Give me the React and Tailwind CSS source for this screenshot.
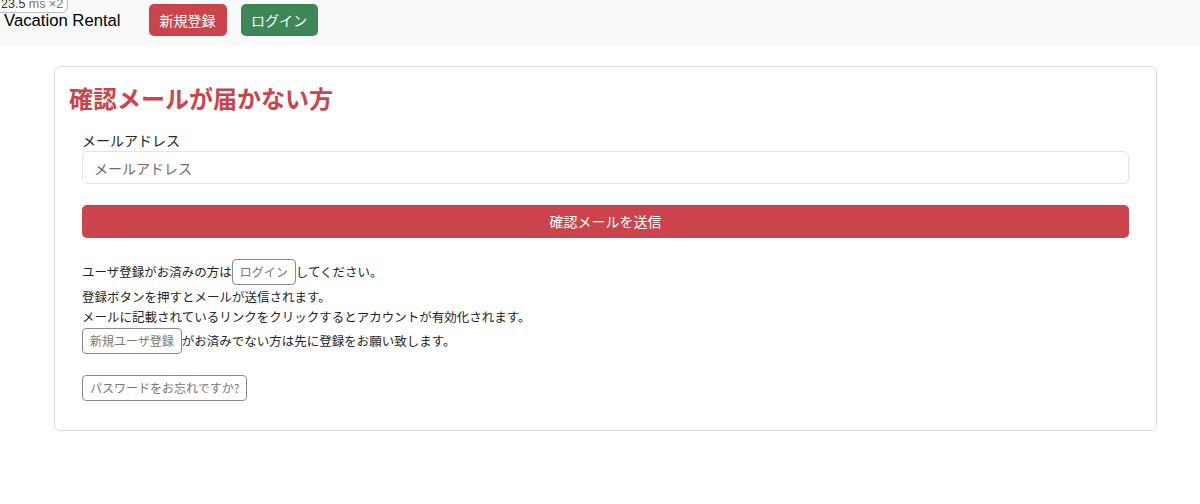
import React from "react";

const jp = { fontFamily: '"Noto Sans CJK JP", "Noto Sans", sans-serif' };

export default function App() {
  return (
    <div className="relative min-h-[504px] bg-white text-[#212529]" style={jp}>
      <div className="absolute left-[-4px] top-[-5px] z-10 rounded-md border border-[#bdbdbd] bg-white px-[4px] leading-[16px] text-[12.5px]" style={{ fontFamily: '"Liberation Sans", Arial, sans-serif' }}>
        <span className="text-[#333]">23.5</span> <span className="text-[#777]">ms ×2</span>
      </div>
      <header className="flex h-[45px] items-start bg-[#f8f9fa] pl-[4px] pt-[4px]">
        <div className="flex h-[32px] items-center">
          <span className="pt-[2px] text-[16.7px] text-black" style={{ fontFamily: '"Liberation Sans", Arial, sans-serif' }}>Vacation Rental</span>
          <button className="ml-[28px] h-[32px] w-[78px] rounded-[5px] bg-[#cc444b] text-[14px] text-white">新規登録</button>
          <button className="ml-[14px] h-[32px] w-[77px] rounded-[5px] bg-[#3e8657] text-[14px] text-white">ログイン</button>
        </div>
      </header>
      <main className="pl-[54px] pt-[21px]">
        <div className="w-[1103px] rounded-[6px] border border-[#dcdcdc] pb-[29px] pl-[14px] pr-[27px] pt-[15px]">
          <h1 className="text-[24px] font-bold leading-[32px] text-[#cc444b]">確認メールが届かない方</h1>
          <div className="pl-[13px] pt-[17px]">
            <label className="block text-[14px] leading-[18px]">メールアドレス</label>
            <input
              className="mt-[2px] block h-[33px] w-full rounded-[6px] border border-[#e3e3e3] px-[11px] text-[14px] placeholder-[#6c6c6c] outline-none"
              placeholder="メールアドレス"
            />
            <button className="mt-[21px] block h-[33px] w-full rounded-[5px] bg-[#cc444b] text-[14px] text-white">確認メールを送信</button>
            <div className="pt-[21px] text-[12.5px]">
              <div className="flex h-[26px] items-center">
                <span>ユーザ登録がお済みの方は</span>
                <button className="h-[26px] rounded-[4px] border border-[#8a8a8a] px-[7px] text-[12px] text-[#777]">ログイン</button>
                <span>してください。</span>
              </div>
              <div className="mt-[2px] leading-[20px]">登録ボタンを押すとメールが送信されます。</div>
              <div className="leading-[20px]">メールに記載されているリンクをクリックするとアカウントが有効化されます。</div>
              <div className="mt-[1px] flex h-[26px] items-center">
                <button className="h-[26px] rounded-[4px] border border-[#8a8a8a] px-[7px] text-[12px] text-[#777]">新規ユーザ登録</button>
                <span>がお済みでない方は先に登録をお願い致します。</span>
              </div>
              <div className="mt-[21px] flex h-[26px] items-center">
                <button className="h-[26px] rounded-[4px] border border-[#8a8a8a] px-[7px] text-[12px] text-[#777]">パスワードをお忘れですか?</button>
              </div>
            </div>
          </div>
        </div>
      </main>
    </div>
  );
}
